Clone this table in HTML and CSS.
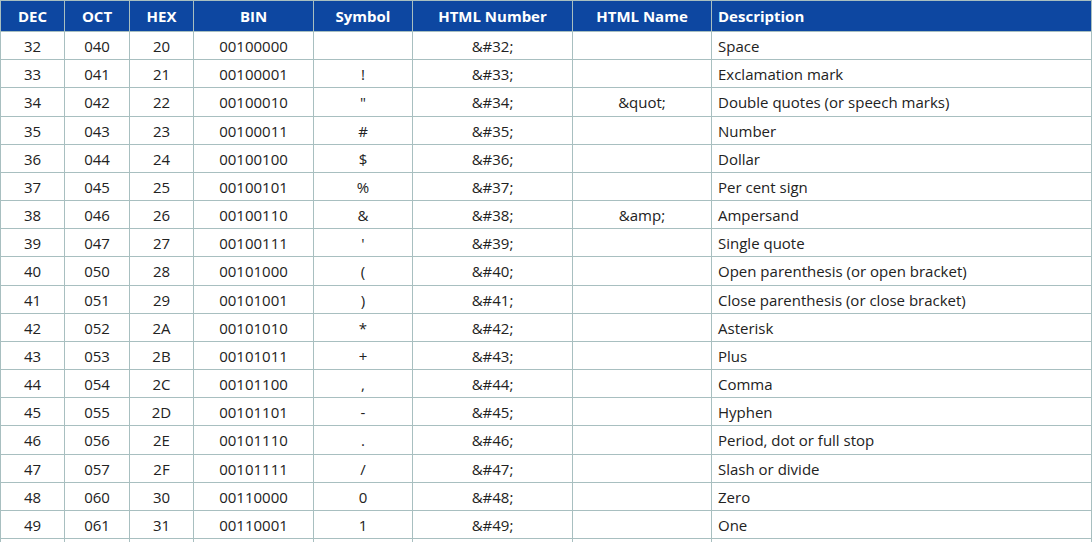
FILE: index.html
```html
<!DOCTYPE html>
<html>
<head>
<meta charset="utf-8">
<link rel="stylesheet" href="styles.css">
</head>
<body>
<table class="ascii">
<colgroup>
<col class="c-dec"><col class="c-oct"><col class="c-hex"><col class="c-bin"><col class="c-sym"><col class="c-num"><col class="c-name"><col class="c-desc">
</colgroup>
<thead>
<tr><th>DEC</th><th>OCT</th><th>HEX</th><th>BIN</th><th>Symbol</th><th>HTML Number</th><th>HTML Name</th><th class="left">Description</th></tr>
</thead>
<tbody>
<tr><td>32</td><td>040</td><td>20</td><td>00100000</td><td></td><td>&amp;#32;</td><td></td><td class="left">Space</td></tr>
<tr><td>33</td><td>041</td><td>21</td><td>00100001</td><td>!</td><td>&amp;#33;</td><td></td><td class="left">Exclamation mark</td></tr>
<tr><td>34</td><td>042</td><td>22</td><td>00100010</td><td>"</td><td>&amp;#34;</td><td>&amp;quot;</td><td class="left">Double quotes (or speech marks)</td></tr>
<tr><td>35</td><td>043</td><td>23</td><td>00100011</td><td>#</td><td>&amp;#35;</td><td></td><td class="left">Number</td></tr>
<tr><td>36</td><td>044</td><td>24</td><td>00100100</td><td>$</td><td>&amp;#36;</td><td></td><td class="left">Dollar</td></tr>
<tr><td>37</td><td>045</td><td>25</td><td>00100101</td><td>%</td><td>&amp;#37;</td><td></td><td class="left">Per cent sign</td></tr>
<tr><td>38</td><td>046</td><td>26</td><td>00100110</td><td>&amp;</td><td>&amp;#38;</td><td>&amp;amp;</td><td class="left">Ampersand</td></tr>
<tr><td>39</td><td>047</td><td>27</td><td>00100111</td><td>'</td><td>&amp;#39;</td><td></td><td class="left">Single quote</td></tr>
<tr><td>40</td><td>050</td><td>28</td><td>00101000</td><td>(</td><td>&amp;#40;</td><td></td><td class="left">Open parenthesis (or open bracket)</td></tr>
<tr><td>41</td><td>051</td><td>29</td><td>00101001</td><td>)</td><td>&amp;#41;</td><td></td><td class="left">Close parenthesis (or close bracket)</td></tr>
<tr><td>42</td><td>052</td><td>2A</td><td>00101010</td><td>*</td><td>&amp;#42;</td><td></td><td class="left">Asterisk</td></tr>
<tr><td>43</td><td>053</td><td>2B</td><td>00101011</td><td>+</td><td>&amp;#43;</td><td></td><td class="left">Plus</td></tr>
<tr><td>44</td><td>054</td><td>2C</td><td>00101100</td><td>,</td><td>&amp;#44;</td><td></td><td class="left">Comma</td></tr>
<tr><td>45</td><td>055</td><td>2D</td><td>00101101</td><td>-</td><td>&amp;#45;</td><td></td><td class="left">Hyphen</td></tr>
<tr><td>46</td><td>056</td><td>2E</td><td>00101110</td><td>.</td><td>&amp;#46;</td><td></td><td class="left">Period, dot or full stop</td></tr>
<tr><td>47</td><td>057</td><td>2F</td><td>00101111</td><td>/</td><td>&amp;#47;</td><td></td><td class="left">Slash or divide</td></tr>
<tr><td>48</td><td>060</td><td>30</td><td>00110000</td><td>0</td><td>&amp;#48;</td><td></td><td class="left">Zero</td></tr>
<tr><td>49</td><td>061</td><td>31</td><td>00110001</td><td>1</td><td>&amp;#49;</td><td></td><td class="left">One</td></tr>
<tr class="tail"><td></td><td></td><td></td><td></td><td></td><td></td><td></td><td></td></tr>
</tbody>
</table>
</body>
</html>
```
FILE: styles.css
```css
html, body {
  margin: 0;
  padding: 0;
  background: #ffffff;
  overflow: hidden;
}
.ascii {
  border-collapse: collapse;
  table-layout: fixed;
  width: 1091px;
  font-family: "Open Sans", "Noto Sans", sans-serif;
  font-size: 15px;
  color: #222222;
}
.c-dec { width: 64px; }
.c-oct { width: 65px; }
.c-hex { width: 64px; }
.c-bin { width: 120px; }
.c-sym { width: 99px; }
.c-num { width: 160px; }
.c-name { width: 139px; }
.c-desc { width: 380px; }
.ascii th, .ascii td {
  border: 1px solid #a8bfc0;
  text-align: center;
  padding: 0 6px;
  white-space: nowrap;
  overflow: hidden;
}
.ascii th {
  background: #0d47a1;
  color: #ffffff;
  font-weight: 700;
  height: 29px;
  line-height: 18px;
  padding-top: 0;
  padding-bottom: 1px;
}
.ascii td {
  height: 26.18px;
  line-height: 18px;
  padding-top: 1px;
  padding-bottom: 0;
}
.ascii .left {
  text-align: left;
}
```
